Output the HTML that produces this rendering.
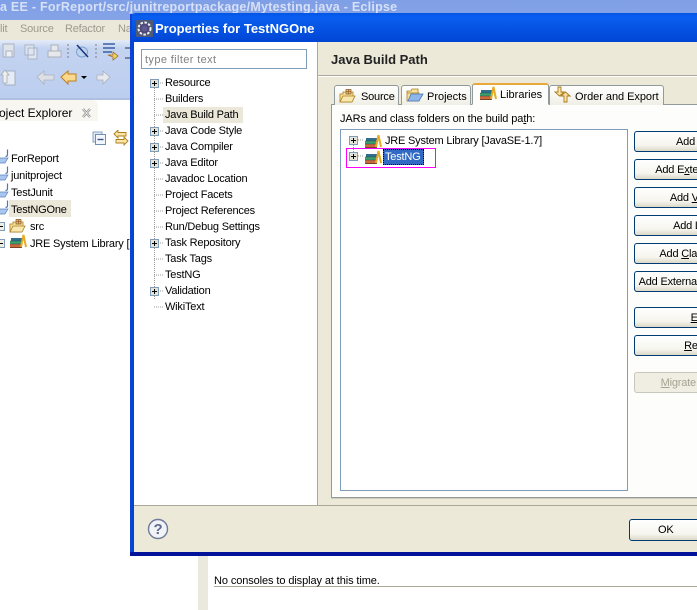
<!DOCTYPE html>
<html><head><meta charset="utf-8">
<style>
html,body{margin:0;padding:0}
body{width:697px;height:610px;overflow:hidden;position:relative;background:#fff;font:11px/13px "Liberation Sans",sans-serif;color:#000;letter-spacing:-.2px}
.a,.t,.b,svg.i{position:absolute}
.t{white-space:nowrap}
.b{box-sizing:border-box;width:140px;left:0;height:21px;border:1px solid #003c74;border-radius:3px;background:linear-gradient(#fff,#f6f5ee 70%,#dcd9c8);text-align:center;line-height:21px;white-space:nowrap;overflow:hidden}
.tab{position:absolute;box-sizing:border-box;border:1px solid #919b9c;border-bottom:none;border-radius:3px 3px 0 0;background:linear-gradient(#fff,#f0efe6)}
u{text-decoration:underline}
</style></head><body>
<svg width="0" height="0" style="position:absolute">
<defs>
<g id="lib"><rect x="1" y="10" width="12" height="3" fill="#c9683a"/><rect x="1" y="13" width="12" height="1" fill="#7a4322"/><rect x="1" y="7" width="12" height="3" fill="#3fa06c"/><rect x="2" y="4" width="11" height="3" fill="#2f6f8c"/><path d="M1 7H13M1 10H13" stroke="#1e4a50" stroke-width=".5"/><path d="M12 13L14.500 1L17 13" fill="none" stroke="#e8ab25" stroke-width="2"/></g>
<g id="plus"><rect x=".5" y=".5" width="8" height="8" fill="#e4e3d8" stroke="#7f9db9"/><path d="M2 4.500H7M4.500 2V7" stroke="#000"/></g>
<g id="proj"><path d="M5.500 .5V5.500Q5.500 7.500 3.500 7.500" fill="none" stroke="#4a78b8" stroke-width="1.200"/><path d="M-3 9H6L3 14H-3Z" fill="#a9c6ee" stroke="#5b83bd" stroke-width=".7"/></g>
<g id="src"><path d="M1 6H4V4H14V12L12 14H1Z" fill="#f7e29b" stroke="#a97d25" stroke-width=".8"/><path d="M1 14L4 8H16L13 14Z" fill="#f9e8ae" stroke="#a97d25" stroke-width=".8"/><path d="M7 1.500H12V6H7ZM9.500 1.500V6M7 3.700H12" fill="#e8b777" stroke="#8a5a22" stroke-width=".7"/></g>
</defs></svg>

<!-- background workbench -->
<div class="a" style="left:0;top:0;width:697px;height:21px;background:linear-gradient(#7f9fe6,#86a3e6)"></div>
<div class="t" style="left:0;top:0;font:bold 12.500px/15px 'Liberation Sans',sans-serif;color:#d6e0f7;letter-spacing:.25px">a EE - ForReport/src/junitreportpackage/Mytesting.java - Eclipse</div>
<div class="a" style="left:0;top:20px;width:130px;height:20px;background:#ebe8d9"></div>
<div class="t" style="left:0;top:23px;color:#9c9a8c">lit</div>
<div class="t" style="left:20px;top:23px;color:#9c9a8c">Source</div>
<div class="t" style="left:65px;top:23px;color:#9c9a8c">Refactor</div>
<div class="t" style="left:118px;top:23px;color:#9c9a8c">Na</div>
<div class="a" style="left:0;top:40px;width:130px;height:58px;background:linear-gradient(#e4ebf8,#c3d3f0 14%,#bccef0)"></div>
<div class="a" style="left:0;top:98px;width:130px;height:2px;background:#aebfe0"></div>

<svg class="i" style="left:0;top:42px" width="130" height="50">
<path d="M3 2H14V15H3Z" fill="#dfe3ea" stroke="#aab3c4"/><rect x="6" y="9" width="6" height="6" fill="#eef0f4" stroke="#aab3c4"/>
<path d="M25 3H34V13H25Z M28 6H37V17H28Z" fill="#dfe6f2" stroke="#a9b4c6"/>
<path d="M48 9H61V15H48ZM51 3H58V9H51Z" fill="#e6e8ec" stroke="#a9afba"/>
<path d="M68 2v2M68 6v2M68 10v2M68 14v2M96 2v2M96 6v2M96 10v2M96 14v2" stroke="#7f7f7f"/>
<ellipse cx="82" cy="10" rx="5.500" ry="5" fill="#bcd4ee" stroke="#7fa3cc"/><path d="M77 3L88 15" stroke="#1d2f7a" stroke-width="1.500"/>
<path d="M103 2H115M103 6H115M103 10H112" stroke="#3a5fa5" stroke-width="1.400"/><path d="M108 13H113V10L118 14L113 18V15Z" fill="#f6cf65" stroke="#9c6f1d" stroke-width=".8"/>
<path d="M125 6H130M125 16H130" stroke="#5a6a80" stroke-width="1.400"/>
<path d="M5 29H15V43H5Z" fill="#e6ecf6" stroke="#a2aec0"/><path d="M1 33L5 28L9 33H7V41H3V33Z" fill="#f0efe8" stroke="#a3adbb" stroke-width=".8"/>
<path d="M37 35L44 29V33H54V38H44V42Z" fill="#dce0e6" stroke="#aab0ba" stroke-width=".8"/>
<path d="M61 35L68 29V32H76V39H68V42Z" fill="#fbd98c" stroke="#c07f17"/>
<path d="M81 34H87L84 37Z" fill="#000"/>
<path d="M110 35L103 29V33H97V38H103V42Z" fill="#e6e9ee" stroke="#aab0ba" stroke-width=".8"/>
</svg>

<div class="a" style="left:0;top:100px;width:98px;height:21px;background:#f7f6f1;border-radius:0 6px 0 0"></div>
<div class="t" style="left:-1px;top:107px;font-size:12px;letter-spacing:0">oject Explorer</div>
<svg class="i" style="left:81px;top:107px" width="12" height="12"><path d="M2 2L9 10M9 2L2 10" stroke="#8f8f8f" stroke-width="2.400"/><path d="M2 2L9 10M9 2L2 10" stroke="#f4f4f4" stroke-width=".8"/></svg>
<svg class="i" style="left:92px;top:130px" width="38" height="18">
<rect x="1" y="2" width="9" height="10" fill="#dde7f3" stroke="#8aa3c0"/><rect x="3.500" y="4.500" width="10" height="10" fill="#f3f6fb" stroke="#6f8fb3"/><path d="M5.500 9.500H11.500" stroke="#35578c" stroke-width="1.400"/>
<path d="M22 4L26 0V2.500H34V6H26V8Z" fill="#fbe6a8" stroke="#b07f1d" stroke-width=".9"/><path d="M36 11L32 7V9.500H24V13H32V15Z" fill="#fbe6a8" stroke="#b07f1d" stroke-width=".9"/>
</svg>

<svg class="i" style="left:0;top:147px" width="10" height="108">
<use href="#proj" x="2" y="2"/><use href="#proj" x="2" y="19"/><use href="#proj" x="2" y="36"/><use href="#proj" x="2" y="53"/>
</svg>
<div class="a" style="left:9px;top:200px;width:62px;height:17px;background:#ebe8d9"></div>
<div class="t" style="left:11px;top:153px">ForReport</div>
<div class="t" style="left:11px;top:170px">junitproject</div>
<div class="t" style="left:11px;top:187px">TestJunit</div>
<div class="t" style="left:11px;top:204px">TestNGOne</div>
<svg class="i" style="left:0;top:218px" width="28" height="34"><rect x="-3.500" y="4.500" width="8" height="8" fill="#efeee5" stroke="#7f9db9"/><path d="M-2 8.500H3" stroke="#000"/><rect x="-3.500" y="21.500" width="8" height="8" fill="#efeee5" stroke="#7f9db9"/><path d="M-2 25.500H3" stroke="#000"/><use href="#src" x="9" y="0"/><use href="#lib" x="9" y="16"/></svg>
<div class="t" style="left:30px;top:221px">src</div>
<div class="t" style="left:30px;top:238px">JRE System Library [</div>

<div class="a" style="left:198px;top:556px;width:10px;height:54px;background:#ebe8dd"></div>
<div class="a" style="left:214px;top:586px;width:483px;height:1px;background:#aca899"></div>
<div class="t" style="left:214px;top:575px;letter-spacing:-.1px">No consoles to display at this time.</div>

<!-- dialog -->
<div class="a" style="left:130px;top:13px;width:567px;height:543px;background:linear-gradient(#0055e5,#0a5ff0 4px,#0046d5 28px);border-radius:6px 0 0 0"></div>
<div class="a" style="left:130px;top:552px;width:567px;height:4px;background:#00129a"></div>
<div class="a" style="left:130px;top:14px;width:2px;height:538px;background:#0f43d8"></div>
<svg class="i" style="left:136px;top:20px" width="17" height="17"><rect width="17" height="17" rx="1" fill="#4e5a78"/><circle cx="8.500" cy="8.500" r="6" fill="#4d4a78" stroke="#f0f0f0" stroke-width="2" stroke-dasharray="2.500 1.500"/><circle cx="8.500" cy="8.500" r="3" fill="#5c5a90"/></svg>
<div class="t" style="left:155px;top:21px;font:bold 13px/16px 'Liberation Sans',sans-serif;color:#fff;letter-spacing:0">Properties for TestNGOne</div>

<div class="a" style="left:134px;top:42px;width:563px;height:510px;background:#ece9d8"></div>
<div class="a" style="left:134px;top:42px;width:183px;height:463px;background:#fff"></div>
<div class="a" style="left:317px;top:42px;width:1px;height:463px;background:#aca899"></div>
<div class="a" style="left:134px;top:505px;width:563px;height:1px;background:#aca899"></div>

<div class="a" style="box-sizing:border-box;left:141px;top:49px;width:166px;height:20px;border:1px solid #7f9db9;background:#fff"></div>
<div class="t" style="left:145px;top:54px;color:#808080;letter-spacing:.38px">type filter text</div>

<svg class="i" style="left:148px;top:77px" width="18" height="232">
<path d="M6.500 5V222" stroke="#9a9a9a" stroke-dasharray="1 1"/>
<path d="M10 6H16M6 22H16M6 38H16M10 54H16M10 70H16M10 86H16M6 102H16M6 118H16M6 134H16M6 150H16M10 166H16M6 182H16M6 198H16M10 214H16M6 230H16" stroke="#9a9a9a" stroke-dasharray="1 1"/>
<use href="#plus" x="2" y="2"/><use href="#plus" x="2" y="50"/><use href="#plus" x="2" y="66"/><use href="#plus" x="2" y="82"/><use href="#plus" x="2" y="162"/><use href="#plus" x="2" y="210"/>
</svg>
<div class="a" style="left:163px;top:107px;width:80px;height:16px;background:#ebe8d9"></div>
<div class="t" style="left:165px;top:77px">Resource</div>
<div class="t" style="left:165px;top:93px">Builders</div>
<div class="t" style="left:165px;top:109px">Java Build Path</div>
<div class="t" style="left:165px;top:125px">Java Code Style</div>
<div class="t" style="left:165px;top:141px">Java Compiler</div>
<div class="t" style="left:165px;top:157px">Java Editor</div>
<div class="t" style="left:165px;top:173px">Javadoc Location</div>
<div class="t" style="left:165px;top:189px">Project Facets</div>
<div class="t" style="left:165px;top:205px">Project References</div>
<div class="t" style="left:165px;top:221px">Run/Debug Settings</div>
<div class="t" style="left:165px;top:237px">Task Repository</div>
<div class="t" style="left:165px;top:253px">Task Tags</div>
<div class="t" style="left:165px;top:269px">TestNG</div>
<div class="t" style="left:165px;top:285px">Validation</div>
<div class="t" style="left:165px;top:301px">WikiText</div>

<div class="t" style="left:331px;top:52px;font:bold 13px/16px 'Liberation Sans',sans-serif;color:#222;letter-spacing:0">Java Build Path</div>
<div class="a" style="left:318px;top:75px;width:379px;height:1px;background:#aca899"></div>
<div class="a" style="left:318px;top:76px;width:379px;height:1px;background:#fff"></div>

<!-- tab folder -->
<div class="a" style="box-sizing:border-box;left:331px;top:104px;width:366px;height:394px;border:1px solid #919b9c;border-right:none;background:#fdfdfb;box-shadow:0 1px 0 #d0cdbc"></div>
<div class="tab" style="left:334px;top:85px;width:65px;height:20px"></div>
<div class="tab" style="left:401px;top:85px;width:70px;height:20px"></div>
<div class="tab" style="left:472px;top:83px;width:77px;height:22px;background:#fdfdfb;border-top:2px solid #e8a93a;z-index:2;border-bottom:1px solid #fdfdfb"></div>
<div class="tab" style="left:549px;top:85px;width:115px;height:20px"></div>
<svg class="i" style="left:339px;top:88px;z-index:3" width="18" height="15"><use href="#src" x="0" y="0"/></svg>
<svg class="i" style="left:406px;top:88px;z-index:3" width="18" height="15"><path d="M1 3H5L6 1H12V5H1Z M1 5H13V13H1Z" fill="#f7e29b" stroke="#a97d25" stroke-width=".8"/><path d="M2 13L5 6H17L13 13Z" fill="#8fb6ea" stroke="#4a78b8" stroke-width=".8"/></svg>
<svg class="i" style="left:479px;top:86px;z-index:3" width="18" height="15"><use href="#lib" x="0" y="0"/></svg>
<svg class="i" style="left:553px;top:86px;z-index:3" width="18" height="17"><path d="M5 1H8V6H11L6.500 10L2 6H5Z" fill="#fbe6a8" stroke="#a8791b" stroke-width=".9"/><path d="M11 16V10H8L12.500 6L17 10H14V16Z" fill="#fbe6a8" stroke="#a8791b" stroke-width=".9"/></svg>
<div class="t" style="left:361px;top:91px;z-index:3">Source</div>
<div class="t" style="left:427px;top:91px;z-index:3;letter-spacing:0">Projects</div>
<div class="t" style="left:500px;top:89px;z-index:3;letter-spacing:0">Libraries</div>
<div class="t" style="left:575px;top:91px;z-index:3;letter-spacing:-.05px">Order and Export</div>
<div class="t" style="left:340px;top:113px;letter-spacing:-.1px">JARs and class folders on the build pa<u>t</u>h:</div>

<!-- tree -->
<div class="a" style="box-sizing:border-box;left:340px;top:129px;width:288px;height:362px;border:1px solid #7f9db9;background:#fff"></div>
<svg class="i" style="left:349px;top:135px" width="33" height="32">
<path d="M4.500 10V17M9 5H15M9 21H15" stroke="#9a9a9a" stroke-dasharray="1 1"/>
<use href="#plus" x="0" y="1"/><use href="#plus" x="0" y="17"/><use href="#lib" x="15" y="-1"/><use href="#lib" x="15" y="15"/>
</svg>
<div class="t" style="left:385px;top:135px">JRE System Library [JavaSE-1.7]</div>
<div class="a" style="left:383px;top:149px;width:41px;height:16px;background:#316ac5;outline:1px dotted #000;outline-offset:-1px"></div>
<div class="t" style="left:385px;top:151px;color:#fff">TestNG</div>
<div class="a" style="box-sizing:border-box;left:346px;top:148px;width:90px;height:20px;border:1px solid #ff00ff"></div>

<!-- buttons -->
<div class="a" style="left:634px;top:120px;width:63px;height:280px;overflow:hidden">
<div class="b" style="top:11px">Add JARs...</div>
<div class="b" style="top:39px">Add E<u>x</u>ternal JARs...</div>
<div class="b" style="top:67px">Add <u>V</u>ariable...</div>
<div class="b" style="top:95px">Add Library...</div>
<div class="b" style="top:123px">Add <u>C</u>lass Folder...</div>
<div class="b" style="top:151px">Add External Class Folder...</div>
<div class="b" style="top:187px"><u>E</u>dit...</div>
<div class="b" style="top:215px"><u>R</u>emove</div>
<div class="b" style="top:252px;border-color:#c9c7ba;background:#f0eee2;color:#a5a392"><u>M</u>igrate JAR File...</div>
</div>

<!-- footer -->
<svg class="i" style="left:147px;top:518px" width="22" height="22"><circle cx="11" cy="11" r="9.500" fill="#f2f3f7" stroke="#6d7a9c" stroke-width="1.400"/><text x="11" y="16" text-anchor="middle" font-family="Liberation Sans,sans-serif" font-weight="bold" font-size="15" fill="#5d6a8e">?</text></svg>
<div class="a" style="left:629px;top:519px;width:68px;height:22px;overflow:hidden">
<div class="b" style="top:0;width:110px;height:22px;line-height:20px;text-align:left;text-indent:28px">OK</div>
</div>
</body></html>
